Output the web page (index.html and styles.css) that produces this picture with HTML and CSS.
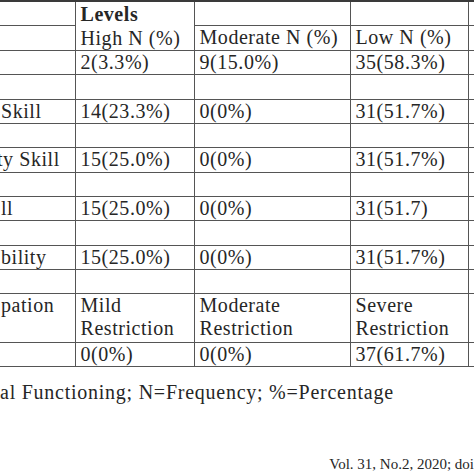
FILE: index.html
```html
<html lang="en">
<head>
    <meta charset="UTF-8">
    <meta name="viewport" content="width=device-width, initial-scale=1.0">
    <title>Levels table</title>
    <link rel="stylesheet" href="styles.css">
</head>
<body>
    <div class="page">
        <table class="levels">
            <colgroup>
                <col class="c-label">
                <col class="c-high">
                <col class="c-mod">
                <col class="c-low">
                <col class="c-extra">
            </colgroup>
            <tr>
                <td></td>
                <td class="head" rowspan="2">Levels<br>High N (%)</td>
                <td></td>
                <td></td>
                <td></td>
            </tr>
            <tr>
                <td></td>
                <td>Moderate N (%)</td>
                <td>Low N (%)</td>
                <td></td>
            </tr>
            <tr>
                <td></td>
                <td>2(3.3%)</td>
                <td>9(15.0%)</td>
                <td>35(58.3%)</td>
                <td></td>
            </tr>
            <tr class="blank"><td></td><td></td><td></td><td></td><td></td></tr>
            <tr>
                <td class="label">Skill</td>
                <td>14(23.3%)</td>
                <td>0(0%)</td>
                <td>31(51.7%)</td>
                <td></td>
            </tr>
            <tr class="blank"><td></td><td></td><td></td><td></td><td></td></tr>
            <tr>
                <td class="label cut">ty Skill</td>
                <td>15(25.0%)</td>
                <td>0(0%)</td>
                <td>31(51.7%)</td>
                <td></td>
            </tr>
            <tr class="blank"><td></td><td></td><td></td><td></td><td></td></tr>
            <tr>
                <td class="label">ll</td>
                <td>15(25.0%)</td>
                <td>0(0%)</td>
                <td>31(51.7)</td>
                <td></td>
            </tr>
            <tr class="blank"><td></td><td></td><td></td><td></td><td></td></tr>
            <tr>
                <td class="label">bility</td>
                <td>15(25.0%)</td>
                <td>0(0%)</td>
                <td>31(51.7%)</td>
                <td></td>
            </tr>
            <tr class="blank"><td></td><td></td><td></td><td></td><td></td></tr>
            <tr class="tall">
                <td class="label">pation</td>
                <td>Mild<br>Restriction</td>
                <td>Moderate<br>Restriction</td>
                <td>Severe<br>Restriction</td>
                <td></td>
            </tr>
            <tr>
                <td></td>
                <td>0(0%)</td>
                <td>0(0%)</td>
                <td>37(61.7%)</td>
                <td></td>
            </tr>
        </table>
        <p class="note">al Functioning; N=Frequency; %=Percentage</p>
        <div class="footer">Vol. 31, No.2, 2020; doi</div>
    </div>
</body>
</html>
```

FILE: styles.css
```css
body {
    margin: 0;
    background-color: #ffffff;
    font-family: "Liberation Serif", "DejaVu Serif", serif;
    color: #262626;
    overflow: hidden;
}
.page {
    width: 474px;
    height: 474px;
    overflow: hidden;
}
.levels {
    border-collapse: collapse;
    table-layout: fixed;
    width: 500px;
    border-top: 2px solid #3a3a3a;
    font-size: 20px;
    letter-spacing: 0.55px;
}
.c-label {
    width: 75px;
}
.c-high {
    width: 119px;
}
.c-mod {
    width: 156px;
}
.c-low {
    width: 118px;
}
.c-extra {
    width: 32px;
}
.levels tr {
    height: 24.33px;
}
.levels tr.tall {
    height: 48.66px;
}
.levels td {
    border: 1px solid #555555;
    padding: 0 0 0 5px;
    line-height: 23px;
    vertical-align: top;
    white-space: nowrap;
    overflow: hidden;
}
.levels td:first-child {
    border-left: none;
    padding-left: 1px;
}
.levels td.cut {
    padding-left: 0;
    text-indent: -3px;
}
.levels td.head {
    line-height: 24px;
}
.levels td.head::first-line {
    font-weight: bold;
}
.note {
    margin: 13px 0 0 0;
    font-size: 20px;
    line-height: 24px;
    letter-spacing: 0.75px;
    white-space: nowrap;
}
.footer {
    margin-top: 51px;
    font-size: 15px;
    line-height: 18px;
    text-align: right;
    white-space: nowrap;
}
```
